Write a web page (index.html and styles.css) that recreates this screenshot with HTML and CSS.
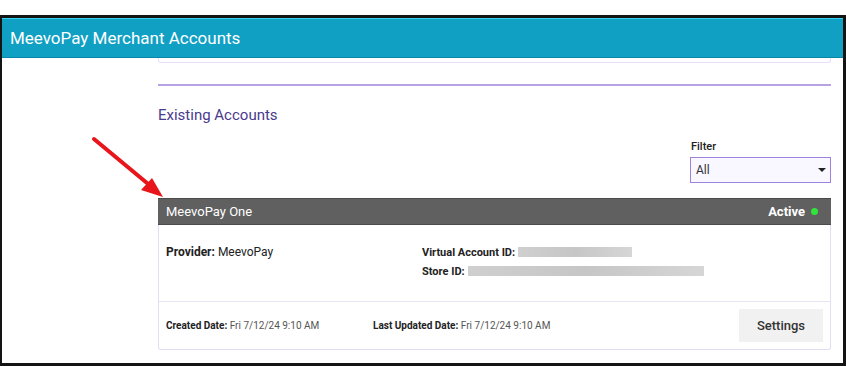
FILE: index.html
```html
<!DOCTYPE html>
<html>
<head>
<meta charset="utf-8">
<link rel="stylesheet" href="styles.css">
</head>
<body>
<div class="frame">
  <div class="topbar">MeevoPay Merchant Accounts</div>
  <div class="content">
    <div class="prev-card-end"></div>
    <div class="divider"></div>
    <h2 class="section-title">Existing Accounts</h2>
    <div class="filter-row">
      <div class="filter">
        <div class="filter-label">Filter</div>
        <div class="select"><span>All</span><span class="caret"></span></div>
      </div>
    </div>
    <div class="card">
      <div class="card-head">
        <span class="card-name">MeevoPay One</span>
        <span class="status">Active <span class="dot"></span></span>
      </div>
      <div class="card-body">
        <div class="col col-left">
          <div class="field"><b>Provider:</b> MeevoPay</div>
        </div>
        <div class="col col-right">
          <div class="field small"><b>Virtual Account ID:</b> <span class="redact" style="width:114px"></span></div>
          <div class="field small"><b>Store ID:</b> <span class="redact" style="width:236px"></span></div>
        </div>
      </div>
      <div class="card-foot">
        <div class="date date-created"><b>Created Date:</b> Fri 7/12/24 9:10 AM</div>
        <div class="date"><b>Last Updated Date:</b> Fri 7/12/24 9:10 AM</div>
        <button class="btn">Settings</button>
      </div>
    </div>
  </div>
  <svg class="arrow" width="80" height="70" viewBox="0 0 80 70">
    <line x1="3" y1="3" x2="62" y2="52" stroke="#e8151b" stroke-width="4" stroke-linecap="round"/>
    <polygon points="72,61 50,54 61,42" fill="#e8151b"/>
  </svg>
</div>
</body>
</html>
```
FILE: styles.css
```css
html, body {
  margin: 0;
  padding: 0;
  background: #fff;
}
body {
  font-family: Roboto, "Liberation Sans", sans-serif;
  color: #222;
}
.frame {
  position: relative;
  margin-top: 15px;
  height: 351px;
  box-sizing: border-box;
  border-top: 3px solid #141414;
  border-left: 2px solid #141414;
  border-right: 3px solid #141414;
  border-bottom: 3px solid #141414;
  overflow: hidden;
}
.topbar {
  height: 40px;
  box-sizing: border-box;
  background: #10a0c4;
  border-top: 1px solid #38d2f2;
  border-bottom: 1px solid #0a86a6;
  color: #fff;
  font-size: 17px;
  padding-left: 8px;
  line-height: 38px;
}
.content {
  padding: 0 12px 0 156px;
}
.prev-card-end {
  height: 4px;
  border: 1px solid #e8e0fb;
  border-top: none;
  border-radius: 0 0 3px 3px;
}
.divider {
  margin-top: 21px;
  border-top: 2px solid #b7a3e3;
}
.section-title {
  margin: 19px 0 0;
  font-size: 15px;
  font-weight: 400;
  color: #4a3a8c;
  line-height: 20px;
}
.filter-row {
  display: flex;
  justify-content: flex-end;
  margin-top: 15px;
}
.filter-label {
  font-size: 11px;
  font-weight: 500;
  color: #222;
  line-height: 13px;
  margin-left: 1px;
  margin-bottom: 4px;
}
.select {
  width: 141px;
  height: 26px;
  box-sizing: border-box;
  border: 1px solid #9d82df;
  background: #f9f7ff;
  display: flex;
  align-items: center;
  justify-content: space-between;
  padding: 0 4px 0 5px;
  font-size: 12px;
  color: #333;
}
.caret {
  width: 0;
  height: 0;
  border-left: 4px solid transparent;
  border-right: 4px solid transparent;
  border-top: 4px solid #222;
}
.card {
  margin-top: 15px;
  border: 1px solid #e3ddf3;
  border-top: none;
  border-radius: 0 0 3px 3px;
}
.card-head {
  height: 27px;
  background: #5f605f;
  border-top: 1px solid #4a4b4a;
  border-bottom: 1px solid #4a4b4a;
  margin: 0 -1px;
  box-sizing: border-box;
  display: flex;
  align-items: center;
  justify-content: space-between;
  padding: 0 13px 0 8px;
  color: #fff;
}
.card-name {
  font-size: 13px;
}
.status {
  font-size: 13px;
  font-weight: 700;
  display: flex;
  align-items: center;
  gap: 6px;
}
.dot {
  width: 7px;
  height: 7px;
  border-radius: 50%;
  background: #31e43a;
}
.card-body {
  display: flex;
  padding: 18px 7px 0;
  height: 77px;
  box-sizing: border-box;
  border-bottom: 1px solid #e8e4f4;
}
.col-left {
  width: 256px;
}
.field {
  font-size: 12px;
  line-height: 18px;
  color: #222;
}
.field b {
  font-weight: 700;
}
.field.small b {
  font-size: 11px;
}
.redact {
  display: inline-block;
  height: 10px;
  vertical-align: -1px;
  background: linear-gradient(90deg, #cfcfcf, #c6c6c6 50%, #d6d6d6);
}
.card-foot {
  display: flex;
  align-items: center;
  height: 47px;
  padding: 0 7px;
}
.date {
  font-size: 10px;
  color: #555;
}
.date b {
  color: #222;
  font-weight: 700;
}
.date-created {
  width: 207px;
}
.btn {
  margin-left: auto;
  width: 84px;
  height: 33px;
  border: none;
  background: #f1f1f1;
  font-family: Roboto, "Liberation Sans", sans-serif;
  font-size: 13px;
  font-weight: 500;
  color: #333;
}
.arrow {
  position: absolute;
  left: 89px;
  top: 118px;
}
```
